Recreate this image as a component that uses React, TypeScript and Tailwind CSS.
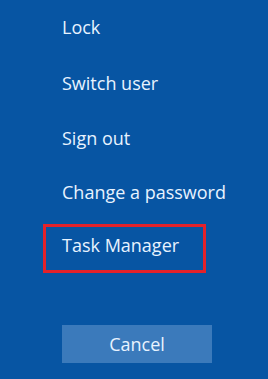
export default function App() {
  const font = { fontFamily: '"Open Sans", "Noto Sans", "Liberation Sans", sans-serif' };
  return (
    <div
      className="w-[268px] h-[379px] bg-[#0755a3] overflow-hidden text-[#e8f3ff] text-[18px] leading-[24px]"
      style={font}
    >
      <div className="flex flex-col pl-[62px] pt-[15px]">
        <div className="h-[24px]">Lock</div>
        <div className="h-[24px] mt-[32px]">Switch user</div>
        <div className="h-[24px] mt-[31px]">Sign out</div>
        <div className="h-[24px] mt-[30px]">Change a password</div>
        <div className="-ml-[19px] mt-[20px] w-[163px] h-[49px] border-[3px] border-solid border-[#e3222b] pl-[16px] pt-[6px]">
          Task Manager
        </div>
      </div>
      <div className="pl-[62px] mt-[52px]">
        <div className="w-[150px] h-[38px] bg-[#3b7abb] flex items-center justify-center">Cancel</div>
      </div>
    </div>
  );
}
